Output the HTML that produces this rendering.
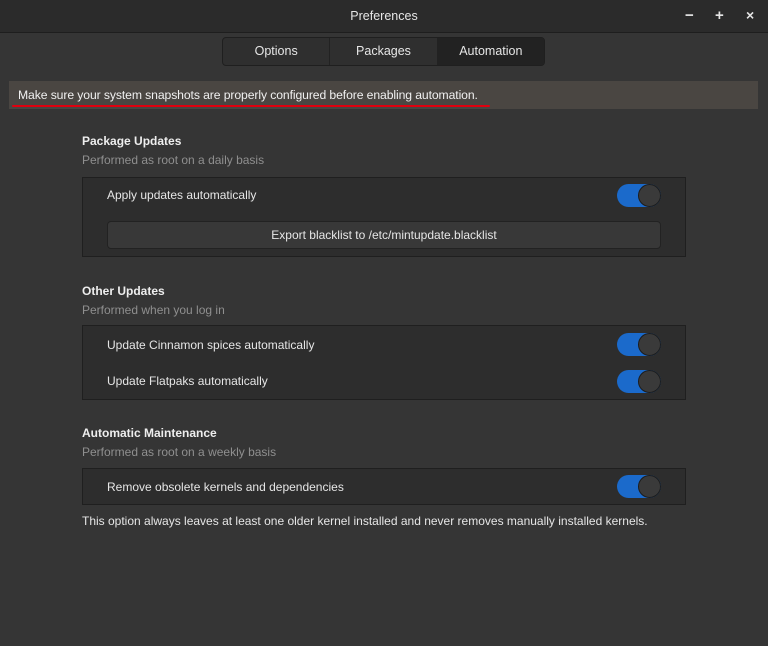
<!DOCTYPE html>
<html><head><style>
body{margin:0;width:768px;height:646px;background:#353535;font-family:"Liberation Sans",sans-serif;color:#e6e6e6;position:relative;overflow:hidden;font-size:12px}
.a{position:absolute}
.title{left:0;top:0;width:768px;height:32px;background:#2b2b2b;border-bottom:1px solid #1e1e1e}
.tabs{left:222px;top:37px;width:323px;height:29px;border:1px solid #1f1f1f;border-radius:4px;background:#2f2f2f;display:flex;overflow:hidden;box-sizing:border-box}
.tabs div{flex:1;text-align:center;line-height:27px;border-right:1px solid #222;font-size:12.5px}
.tabs div:last-child{border:none;background:#222}
.banner{left:9px;top:81px;width:749px;height:28px;background:#4a4642;color:#f0f0f0;font-size:12.2px;line-height:28px;padding-left:9px;box-sizing:border-box;letter-spacing:-0.1px}
.red{left:12px;top:105px;width:478px;height:2px;background:#e0000f;border-radius:2px}
h{position:absolute;left:82px;font-weight:bold;font-size:12px;color:#eee}
.sub{left:82px;color:#8f8f8f;font-size:12px}
.frame{left:82px;width:604px;background:#2d2d2d;border:1px solid #1f1f1f;box-sizing:border-box}
.lab{left:107px;font-size:12px}
.tg{left:617px;width:44px;height:23px;border-radius:12px;background:#1b6acb}
.tg:after{content:"";position:absolute;right:0;top:0;width:21px;height:21px;border-radius:50%;background:#3a3a3a;border:1px solid #1c1c1c}
.btn{left:107px;top:221px;width:554px;height:28px;background:#383838;border:1px solid #222;border-radius:4px;box-sizing:border-box;text-align:center;line-height:27px}
</style></head><body>
<div class="a title"></div>
<div class="a" style="left:0;width:768px;top:9px;text-align:center;font-size:12.5px">Preferences</div>
<div class="a" style="left:685px;top:7px;font-size:15px;font-weight:bold">−</div>
<div class="a" style="left:715px;top:7px;font-size:15px;font-weight:bold">+</div>
<div class="a" style="left:746px;top:7px;font-size:14px;font-weight:bold">×</div>
<div class="a tabs"><div>Options</div><div>Packages</div><div>Automation</div></div>
<div class="a banner">Make sure your system snapshots are properly configured before enabling automation.</div>
<div class="a red"></div>

<h style="top:134px">Package Updates</h>
<div class="a sub" style="top:153px">Performed as root on a daily basis</div>
<div class="a frame" style="top:177px;height:80px"></div>
<div class="a lab" style="top:188px">Apply updates automatically</div>
<div class="a tg" style="top:184px"></div>
<div class="a btn">Export blacklist to /etc/mintupdate.blacklist</div>

<h style="top:284px">Other Updates</h>
<div class="a sub" style="top:303px">Performed when you log in</div>
<div class="a frame" style="top:325px;height:75px"></div>
<div class="a lab" style="top:338px">Update Cinnamon spices automatically</div>
<div class="a tg" style="top:333px"></div>
<div class="a lab" style="top:374px">Update Flatpaks automatically</div>
<div class="a tg" style="top:370px"></div>

<h style="top:426px">Automatic Maintenance</h>
<div class="a sub" style="top:445px">Performed as root on a weekly basis</div>
<div class="a frame" style="top:468px;height:37px"></div>
<div class="a lab" style="top:480px">Remove obsolete kernels and dependencies</div>
<div class="a tg" style="top:475px"></div>
<div class="a" style="left:82px;top:514px">This option always leaves at least one older kernel installed and never removes manually installed kernels.</div>
</body></html>
